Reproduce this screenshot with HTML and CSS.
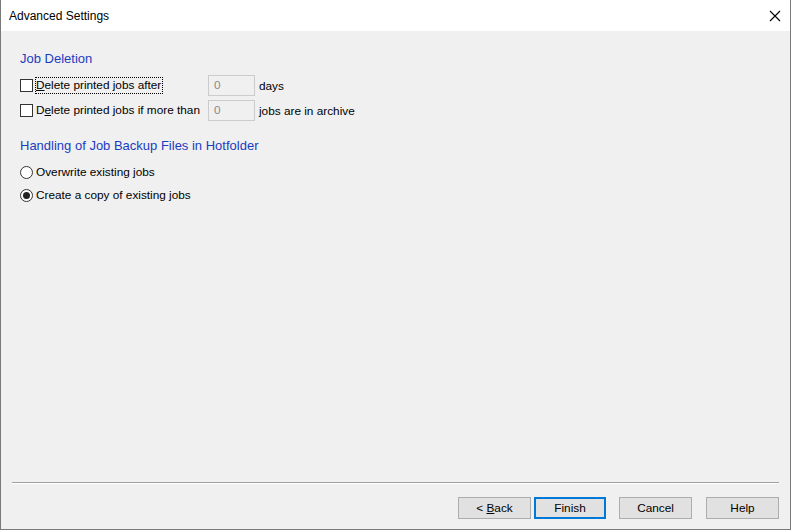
FILE: index.html
```html
<!DOCTYPE html>
<html>
<head>
<meta charset="utf-8">
<link rel="stylesheet" href="styles.css">
</head>
<body>
<div class="window">
  <div class="titlebar">
    <span class="title">Advanced Settings</span>
    <svg class="close" width="12" height="12" viewBox="0 0 12 12"><path d="M1 1 L11 11 M11 1 L1 11" stroke="#000" stroke-width="1.1" fill="none"/></svg>
  </div>
  <div class="content">
    <div class="heading">Job Deletion</div>
    <div class="grid">
      <div class="check-cell">
        <span class="checkbox"></span>
        <span class="label focus"><u>D</u>elete printed jobs after</span>
      </div>
      <div class="field">0</div>
      <div class="after">days</div>
      <div class="check-cell">
        <span class="checkbox"></span>
        <span class="label">D<u>e</u>lete printed jobs if more than</span>
      </div>
      <div class="field">0</div>
      <div class="after">jobs are in archive</div>
    </div>
    <div class="heading h2">Handling of Job Backup Files in Hotfolder</div>
    <div class="radio-row">
      <span class="radio"></span>
      <span class="label">Overwrite existing jobs</span>
    </div>
    <div class="radio-row r2">
      <span class="radio checked"></span>
      <span class="label">Create a copy of existing jobs</span>
    </div>
  </div>
  <div class="footer">
    <div class="separator"></div>
    <div class="buttons">
      <button class="btn">&lt; <u>B</u>ack</button>
      <button class="btn default">Finish</button>
      <button class="btn cancel">Cancel</button>
      <button class="btn help">Help</button>
    </div>
  </div>
</div>
</body>
</html>
```

FILE: styles.css
```css
html, body {
  margin: 0;
  padding: 0;
}
body {
  width: 791px;
  height: 530px;
  overflow: hidden;
  font-family: "Liberation Sans", Arial, sans-serif;
  font-size: 11.8px;
  color: #000;
}
.window {
  box-sizing: border-box;
  width: 791px;
  height: 530px;
  background: #f0f0f0;
  border: 1px solid #7a7a7a;
  border-top: none;
  display: flex;
  flex-direction: column;
}
.titlebar {
  height: 31px;
  flex: none;
  background: #fff;
  display: flex;
  align-items: center;
  padding-left: 8px;
  padding-right: 9px;
  padding-top: 1px;
  box-sizing: border-box;
}
.title {
  flex: 1;
  font-size: 12px;
  line-height: 16px;
}
.close {
  display: block;
  margin-top: -1px;
}
.content {
  flex: 1;
  padding: 20px 0 0 19px;
}
.heading {
  font-size: 13px;
  line-height: 16px;
  color: #1c3cc0;
}
.h2 {
  margin-top: 17px;
}
.grid {
  display: grid;
  grid-template-columns: 184px 47px auto;
  grid-auto-rows: 21px;
  row-gap: 4px;
  column-gap: 4px;
  margin-top: 8px;
  align-items: center;
}
.check-cell {
  display: flex;
  align-items: center;
  height: 21px;
}
.checkbox {
  box-sizing: border-box;
  width: 13px;
  height: 13px;
  border: 1px solid #333;
  background: #fff;
  flex: none;
}
.label {
  margin-left: 3px;
  line-height: 15px;
}
.focus {
  outline: 1px dotted #000;
  outline-offset: 0;
  margin-left: 3px;
  padding: 0 1px 0 0;
}
.field {
  box-sizing: border-box;
  height: 21px;
  border: 1px solid #cccccc;
  background: #f0f0f0;
  color: #8a8a8a;
  padding-left: 5px;
  line-height: 19px;
}
.radio-row {
  display: flex;
  align-items: center;
  height: 16px;
  margin-top: 10px;
}
.radio-row.r2 {
  margin-top: 7px;
}
.radio {
  box-sizing: border-box;
  width: 13px;
  height: 13px;
  border: 1px solid #333;
  border-radius: 50%;
  background: #fff;
  flex: none;
  display: flex;
  align-items: center;
  justify-content: center;
}
.radio.checked::after {
  content: "";
  width: 7px;
  height: 7px;
  border-radius: 50%;
  background: #222;
}
.footer {
  flex: none;
  padding: 0 11px 10px 11px;
}
.separator {
  height: 1px;
  background: #a0a0a0;
  border-bottom: 1px solid #fff;
}
.buttons {
  display: flex;
  justify-content: flex-end;
  margin-top: 13px;
}
.btn {
  box-sizing: border-box;
  width: 73px;
  height: 22px;
  background: #e1e1e1;
  border: 1px solid #adadad;
  font-family: "Liberation Sans", Arial, sans-serif;
  font-size: 11.8px;
  color: #000;
  padding: 0;
  margin: 0;
}
.btn.default {
  width: 72px;
  border: 2px solid #0078d7;
  margin-left: 3px;
}
.btn.cancel {
  margin-left: 13px;
}
.btn.help {
  margin-left: 14px;
}
```
